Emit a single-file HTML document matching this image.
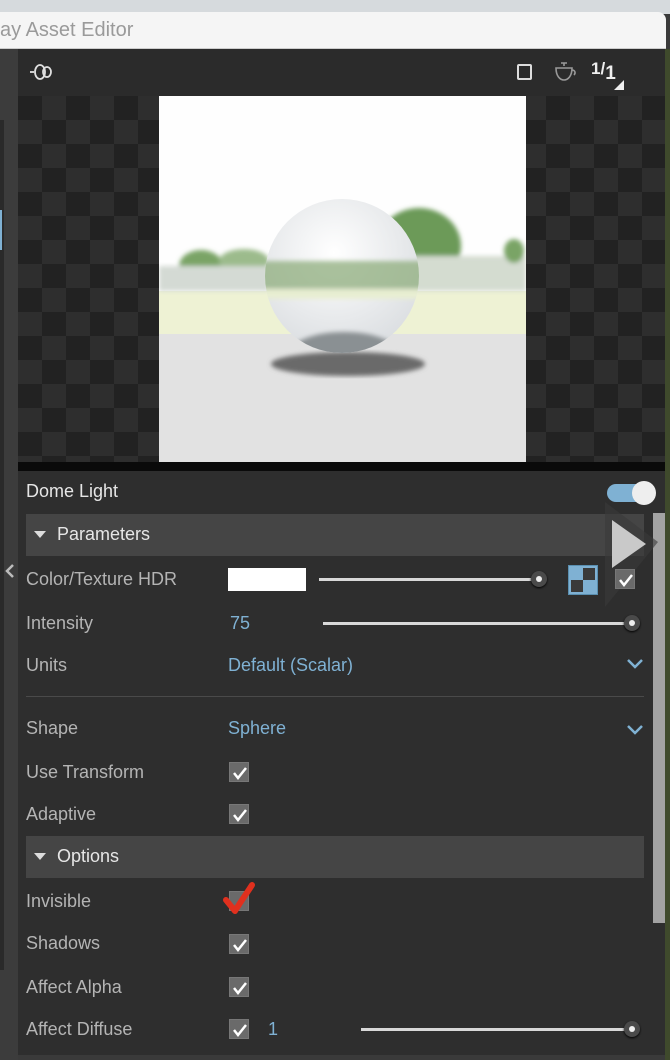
<!DOCTYPE html>
<html><head><meta charset="utf-8"><style>
*{margin:0;padding:0;box-sizing:border-box}
body{width:670px;height:1060px;overflow:hidden;background:#3a3a3a;font-family:"Liberation Sans",sans-serif;position:relative}
.abs{position:absolute}
.lbl{position:absolute;left:26px;color:#b4b4b4;font-size:18px}
.val{position:absolute;left:228px;color:#7fb1d3;font-size:18px}
.cb{position:absolute;left:229px;width:20px;height:20px;background:#6a6a6a;border:1px solid #777}
.cb svg{position:absolute;left:2px;top:2px}
.slider{position:absolute;height:3px;background:#d8d8d8}
.knob{position:absolute;width:16px;height:16px;border-radius:50%;background:#4a4a4a;box-shadow:0 1px 2px #000}
.knob:after{content:"";position:absolute;left:5px;top:5px;width:6px;height:6px;border-radius:50%;background:#eee}
.hdr{position:absolute;left:26px;width:618px;background:#454545;color:#e6e6e6;font-size:18px}
.chev{position:absolute;left:626px}
</style></head><body>
<div class="abs" style="left:0;top:0;width:670px;height:14px;background:#d6dadd"></div>
<div class="abs" style="left:0;top:12px;width:666px;height:37px;background:#f5f5f5;border-radius:0 8px 0 0;border-bottom:1px solid #ccc"></div>
<div class="abs" style="left:0;top:19px;color:#9a9a9a;font-size:20px">ay Asset Editor</div>
<div class="abs" style="left:0;top:49px;width:18px;height:1011px;background:#3c3c3c"></div>
<div class="abs" style="left:0;top:120px;width:4px;height:850px;background:#2a2a2a"></div>
<div class="abs" style="left:0;top:210px;width:2px;height:40px;background:#7fb1d3"></div>
<div class="abs" style="left:665px;top:49px;width:5px;height:1011px;background:#3f4a2c"></div>
<div class="abs" style="left:18px;top:49px;width:647px;height:1006px;background:#2e2e2e"></div>
<div class="abs" style="left:18px;top:49px;width:647px;height:47px;background:#2b2b2b"></div>
<svg class="abs" style="left:28px;top:60px" width="28" height="24" viewBox="0 0 28 24"><g fill="none" stroke="#e0e0e0" stroke-width="1.8"><path d="M2 12h4"/><ellipse cx="12" cy="12" rx="5" ry="7"/><ellipse cx="19" cy="12" rx="4" ry="5"/></g></svg>
<div class="abs" style="left:517px;top:64px;width:15px;height:16px;border:2px solid #ddd;border-radius:2px"></div>
<svg class="abs" style="left:551px;top:60px" width="28" height="24" viewBox="0 0 28 24"><g fill="none" stroke="#999" stroke-width="1.6"><path d="M10 3h6M13 3v3M5 8h16c0 8-4 12-8 12s-8-4-8-12zM21 10c3 0 4 3 2 5"/></g></svg>
<div class="abs" style="left:591px;top:58px;color:#eee;font-size:17px;font-weight:bold">1/<span style="font-size:19px;position:relative;top:5px">1</span></div>
<div class="abs" style="left:614px;top:80px;width:0;height:0;border-left:10px solid transparent;border-bottom:10px solid #eee"></div>
<div class="abs" style="left:18px;top:96px;width:647px;height:366px;background-color:#2e2e2e;background-image:linear-gradient(45deg,#222 25%,transparent 25%,transparent 75%,#222 75%),linear-gradient(45deg,#222 25%,transparent 25%,transparent 75%,#222 75%);background-size:48px 48px;background-position:24px 0,0 24px"></div>
<svg class="abs" style="left:159px;top:96px" width="367" height="366" viewBox="0 0 367 366">
<defs><radialGradient id="sp" cx="0.45" cy="0.35" r="0.65"><stop offset="0" stop-color="#fff"/><stop offset="1" stop-color="#dcdfe2"/></radialGradient><filter id="b"><feGaussianBlur stdDeviation="2.5"/></filter><clipPath id="c"><circle cx="183" cy="180" r="77"/></clipPath></defs>
<rect width="367" height="366" fill="#fefefe"/>
<rect y="195" width="367" height="45" fill="#eef2d4"/>
<rect y="238" width="367" height="128" fill="#e2e2e2"/>
<g filter="url(#b)">
<ellipse cx="260" cy="150" rx="42" ry="38" fill="#6c9a58"/>
<rect x="220" y="160" width="147" height="35" fill="#d4dcd0"/>
<ellipse cx="42" cy="170" rx="22" ry="16" fill="#7aa466"/>
<ellipse cx="85" cy="165" rx="25" ry="12" fill="#9cbb8c"/>
<rect x="0" y="170" width="110" height="25" fill="#d4dad4"/>
<ellipse cx="355" cy="155" rx="10" ry="12" fill="#7aa466"/>
</g>
<ellipse cx="189" cy="268" rx="77" ry="12" fill="#6a6a6a" filter="url(#b)"/>
<circle cx="183" cy="180" r="77" fill="url(#sp)"/>
<g clip-path="url(#c)" filter="url(#b)">
<rect x="100" y="165" width="170" height="28" fill="#8fae7c" opacity=".75"/>
<rect x="100" y="193" width="170" height="10" fill="#e8eed2"/>
<ellipse cx="185" cy="258" rx="55" ry="22" fill="#8a9093"/>
</g>
</svg>
<div class="abs" style="left:18px;top:462px;width:647px;height:9px;background:#0a0a0a"></div>
<div class="abs" style="left:26px;top:481px;color:#e6e6e6;font-size:18px">Dome Light</div>
<div class="abs" style="left:607px;top:484px;width:44px;height:18px;border-radius:9px;background:#7fb1d3"></div>
<div class="abs" style="left:632px;top:481px;width:24px;height:24px;border-radius:50%;background:#eee"></div>
<div class="hdr" style="top:514px;height:42px;padding:10px 0 0 31px">Parameters</div>
<div class="abs" style="left:34px;top:531px;border-left:6px solid transparent;border-right:6px solid transparent;border-top:7px solid #ddd"></div>
<div class="abs" style="left:653px;top:513px;width:12px;height:410px;background:#a3a3a3"></div>
<svg class="abs" style="left:600px;top:502px" width="60" height="110"><path d="M5 0L58 40 5 105z" fill="#3a3a3a" opacity=".6"/><path d="M12 18L46 42 12 66z" fill="#c9c9c9"/></svg>
<svg class="abs" style="left:4px;top:563px" width="12" height="16"><path d="M9 2L3 8l6 6" fill="none" stroke="#bbb" stroke-width="2.5"/></svg>
<div class="lbl" style="top:569px">Color/Texture HDR</div>
<div class="abs" style="left:228px;top:568px;width:78px;height:23px;background:#fff"></div>
<div class="slider" style="left:319px;top:578px;width:220px"></div>
<div class="knob" style="left:531px;top:571px"></div>
<div class="abs" style="left:568px;top:565px;width:30px;height:30px;background:#7fb1d3;border:1px solid #5a8fb0"></div>
<div class="abs" style="left:583px;top:568px;width:12px;height:12px;background:#3a3a3a"></div>
<div class="abs" style="left:571px;top:580px;width:12px;height:12px;background:#3a3a3a"></div>
<div class="cb" style="left:615px;top:569px"><svg width="16" height="16"><path d="M2 8l4 5 8-10" fill="none" stroke="#fff" stroke-width="2.5"/></svg></div>
<div class="lbl" style="top:613px">Intensity</div>
<div class="val" style="top:613px;left:230px">75</div>
<div class="slider" style="left:323px;top:622px;width:310px"></div>
<div class="knob" style="left:624px;top:615px"></div>
<div class="lbl" style="top:655px">Units</div>
<div class="val" style="top:655px">Default (Scalar)</div>
<svg class="chev" style="top:658px" width="18" height="12"><path d="M2 2l7 7 7-7" fill="none" stroke="#7fb1d3" stroke-width="2.5"/></svg>
<div class="abs" style="left:26px;top:696px;width:618px;height:1px;background:#4a4a4a"></div>
<div class="lbl" style="top:718px">Shape</div>
<div class="val" style="top:718px">Sphere</div>
<svg class="chev" style="top:724px" width="18" height="12"><path d="M2 2l7 7 7-7" fill="none" stroke="#7fb1d3" stroke-width="2.5"/></svg>
<div class="lbl" style="top:762px">Use Transform</div>
<div class="cb" style="top:762px"><svg width="16" height="16"><path d="M2 8l4 5 8-10" fill="none" stroke="#fff" stroke-width="2.5"/></svg></div>
<div class="lbl" style="top:804px">Adaptive</div>
<div class="cb" style="top:804px"><svg width="16" height="16"><path d="M2 8l4 5 8-10" fill="none" stroke="#fff" stroke-width="2.5"/></svg></div>
<div class="hdr" style="top:836px;height:42px;padding:10px 0 0 31px">Options</div>
<div class="abs" style="left:34px;top:853px;border-left:6px solid transparent;border-right:6px solid transparent;border-top:7px solid #ddd"></div>
<div class="lbl" style="top:891px">Invisible</div>
<div class="cb" style="top:891px"></div>
<svg class="abs" style="left:222px;top:882px" width="40" height="34"><path d="M4 18l9 11c6-10 12-18 17-26" fill="none" stroke="#e0301e" stroke-width="6" stroke-linecap="round" stroke-linejoin="round"/></svg>
<div class="lbl" style="top:933px">Shadows</div>
<div class="cb" style="top:934px"><svg width="16" height="16"><path d="M2 8l4 5 8-10" fill="none" stroke="#fff" stroke-width="2.5"/></svg></div>
<div class="lbl" style="top:977px">Affect Alpha</div>
<div class="cb" style="top:977px"><svg width="16" height="16"><path d="M2 8l4 5 8-10" fill="none" stroke="#fff" stroke-width="2.5"/></svg></div>
<div class="lbl" style="top:1019px">Affect Diffuse</div>
<div class="cb" style="top:1019px"><svg width="16" height="16"><path d="M2 8l4 5 8-10" fill="none" stroke="#fff" stroke-width="2.5"/></svg></div>
<div class="val" style="top:1019px;left:268px">1</div>
<div class="slider" style="left:361px;top:1028px;width:272px"></div>
<div class="knob" style="left:624px;top:1021px"></div>
</body></html>
